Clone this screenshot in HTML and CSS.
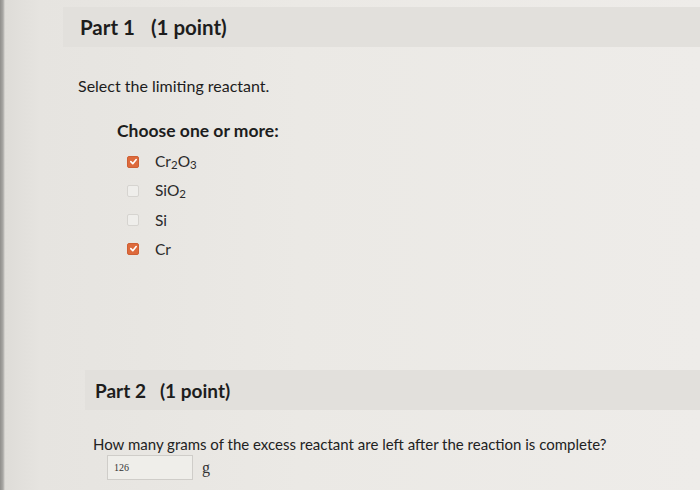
FILE: index.html
```html
<!DOCTYPE html>
<html>
<head>
<meta charset="utf-8">
<link rel="stylesheet" href="styles.css">
</head>
<body>
<div class="page">
  <div class="part-head part1-head">
    <span class="part-label">Part 1</span><span class="part-points">(1 point)</span>
  </div>
  <p class="prompt">Select the limiting reactant.</p>
  <div class="choices">
    <div class="choose">Choose one or more:</div>
    <div class="option"><span class="box checked"><svg viewBox="0 0 10 10" width="9" height="9"><path d="M2 5.2 L4.2 7.4 L8 2.8" fill="none" stroke="#fff" stroke-width="1.8" stroke-linecap="round" stroke-linejoin="round"/></svg></span><span class="opt-text">Cr<sub>2</sub>O<sub>3</sub></span></div>
    <div class="option"><span class="box"></span><span class="opt-text">SiO<sub>2</sub></span></div>
    <div class="option"><span class="box"></span><span class="opt-text">Si</span></div>
    <div class="option"><span class="box checked"><svg viewBox="0 0 10 10" width="9" height="9"><path d="M2 5.2 L4.2 7.4 L8 2.8" fill="none" stroke="#fff" stroke-width="1.8" stroke-linecap="round" stroke-linejoin="round"/></svg></span><span class="opt-text">Cr</span></div>
  </div>
  <div class="part-head part2-head">
    <span class="part-label">Part 2</span><span class="part-points">(1 point)</span>
  </div>
  <p class="question">How many grams of the excess reactant are left after the reaction is complete?</p>
  <div class="answer-row">
    <div class="answer-box">126</div>
    <span class="unit">g</span>
  </div>
</div>
</body>
</html>
```

FILE: styles.css
```css
html, body {
  margin: 0;
  padding: 0;
}
body {
  width: 700px;
  height: 490px;
  overflow: hidden;
  background: linear-gradient(90deg, #8f8e8b 0px, #a9a8a5 3px, #dedcd8 5px, #e6e4e0 40px, #ebe9e5 300px, #eeece9 700px);
  font-family: Lato, "Open Sans", sans-serif;
  color: #1d1d1d;
}
.page {
  display: flex;
  flex-direction: column;
  height: 490px;
}
.part-head {
  display: flex;
  align-items: center;
  font-weight: 700;
  background: #e2e0dc;
}
.part1-head {
  margin: 7px 0 0 63px;
  height: 40px;
  padding-left: 17px;
  font-size: 20.5px;
}
.part1-head .part-label {
  margin-right: 16px;
}
.part2-head {
  margin: 0 0 0 85px;
  height: 40px;
  padding-left: 10px;
  font-size: 19px;
}
.part2-head .part-label {
  margin-right: 14px;
}
.prompt {
  margin: 29px 0 0 78px;
  font-size: 16px;
  line-height: 20px;
}
.choices {
  margin: 24px 0 0 117px;
  display: flex;
  flex-direction: column;
}
.choose {
  font-weight: 700;
  font-size: 17.5px;
  line-height: 22px;
  margin-bottom: 5px;
}
.option {
  display: flex;
  align-items: center;
  height: 29px;
  font-size: 15.5px;
  color: #2a2a2a;
}
.box {
  width: 10px;
  height: 10px;
  margin-left: 10px;
  margin-right: 16px;
  border: 1px solid #d6d4d0;
  border-radius: 2px;
  background: #efeeeb;
  display: flex;
  align-items: center;
  justify-content: center;
}
.box.checked {
  background: #dd6a3c;
  border-color: #cf5f33;
}
sub {
  font-size: 11.5px;
  vertical-align: -2px;
}
.part2-head {
  margin-top: 107px;
}
.question {
  margin: 24px 0 0 93px;
  font-size: 15px;
  line-height: 20px;
  color: #222;
}
.answer-row {
  display: flex;
  align-items: center;
  margin: 1px 0 0 107px;
}
.answer-box {
  width: 78px;
  height: 23px;
  border: 1px solid #cfcdc9;
  background: #efeeea;
  font-family: "Liberation Serif", serif;
  font-size: 10px;
  line-height: 23px;
  padding-left: 6px;
  color: #333;
}
.unit {
  margin-left: 9px;
  font-family: "Liberation Serif", serif;
  font-size: 16px;
  color: #333;
}
```
